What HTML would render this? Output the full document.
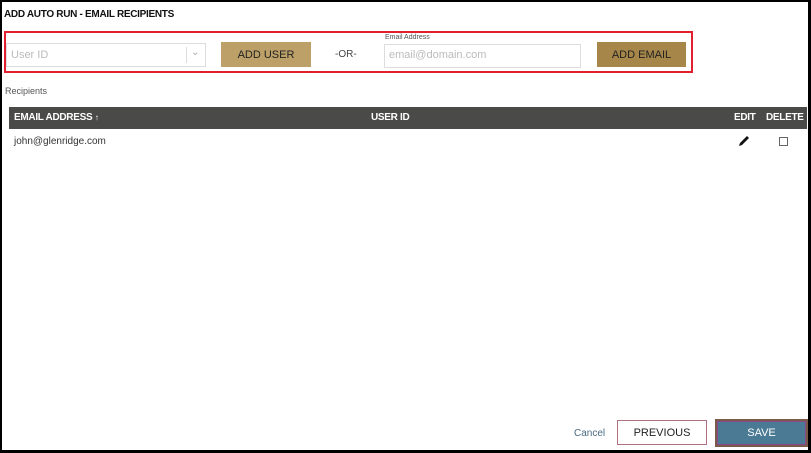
<!DOCTYPE html>
<html><head><style>
*{margin:0;padding:0;box-sizing:border-box}
body{width:811px;height:453px;background:#000;position:relative;overflow:hidden;font-family:"Liberation Sans",Arial,sans-serif}
.page{position:absolute;left:2px;top:2px;width:806px;height:448px;background:#fff}
.a{position:absolute;white-space:nowrap}
.btn{position:absolute;display:flex;align-items:center;justify-content:center;font-size:11px;color:#222}
.h{position:absolute;top:112px;font-size:10px;font-weight:bold;color:#fff;letter-spacing:-0.3px}
</style></head><body>
<div class="page"></div>
<div class="a" style="left:4px;top:9px;font-size:10px;font-weight:bold;color:#111;letter-spacing:-0.3px">ADD AUTO RUN - EMAIL RECIPIENTS</div>
<div class="a" style="left:4px;top:31px;width:689px;height:42px;border:2px solid #e0202f"></div>
<div class="a" style="left:6px;top:43px;width:200px;height:24px;border:1px solid #ddd;background:#fff"></div>
<div class="a" style="left:11px;top:49px;font-size:11px;color:#bbb">User ID</div>
<div class="a" style="left:186px;top:47px;width:1px;height:16px;background:#ddd"></div>
<div class="a" style="left:191px;top:47px;font-size:10px;color:#aaa">⌄</div>
<div class="btn" style="left:221px;top:42px;width:90px;height:25px;background:#bca068">ADD USER</div>
<div class="a" style="left:335px;top:49px;font-size:10px;color:#444">-OR-</div>
<div class="a" style="left:385px;top:34px;font-size:7px;color:#555">Email Address</div>
<div class="a" style="left:384px;top:44px;width:197px;height:24px;border:1px solid #ddd"></div>
<div class="a" style="left:389px;top:49px;font-size:11px;color:#bbb">email@domain.com</div>
<div class="btn" style="left:597px;top:42px;width:89px;height:25px;background:#a68749">ADD EMAIL</div>
<div class="a" style="left:5px;top:86px;font-size:9px;color:#555">Recipients</div>
<div class="a" style="left:9px;top:107px;width:798px;height:22px;background:#4a4a48"></div>
<div class="h" style="left:14px">EMAIL ADDRESS <span style="font-size:8px">↑</span></div>
<div class="h" style="left:371px">USER ID</div>
<div class="h" style="left:734px">EDIT</div>
<div class="h" style="left:766px">DELETE</div>
<div class="a" style="left:14px;top:136px;font-size:10px;color:#333">john@glenridge.com</div>
<svg class="a" style="left:738px;top:134px" width="13" height="13" viewBox="0 0 13 13"><path d="M1 12 L2 9 L9 2 L11 4 L4 11 Z" fill="#111"/></svg>
<div class="a" style="left:779px;top:137px;width:9px;height:9px;border:1px solid #666"></div>
<div class="a" style="left:574px;top:428px;font-size:10px;color:#4a6a80">Cancel</div>
<div class="btn" style="left:617px;top:420px;width:90px;height:25px;border:1px solid #b07080;background:#fff">PREVIOUS</div>
<div class="btn" style="left:715px;top:419px;width:93px;height:28px;background:#4a7a94;border:2px solid #7a5a4a;box-shadow:inset 0 0 0 1px #8a4a8a;color:#fff">SAVE</div>
</body></html>
